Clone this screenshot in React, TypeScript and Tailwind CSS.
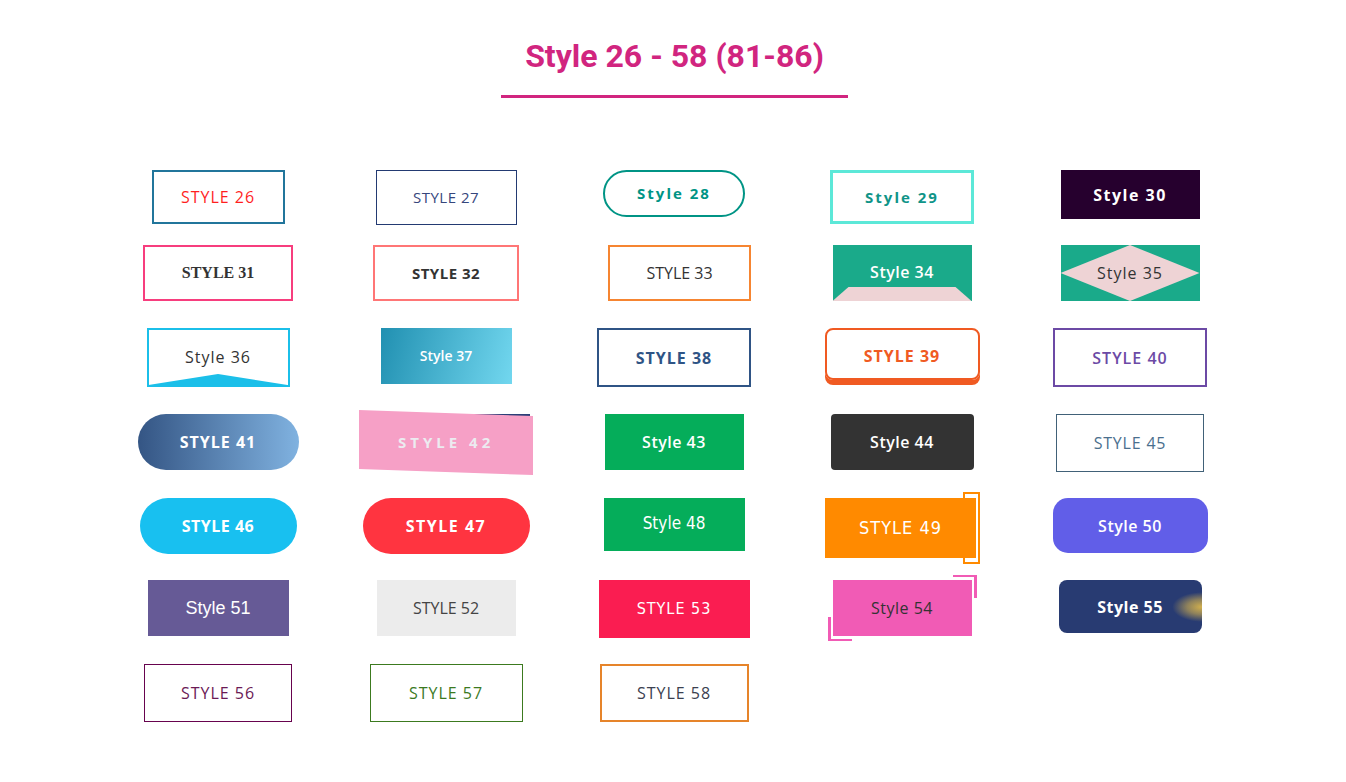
import React from "react";

const sans = "font-['Open_Sans','Noto_Sans',sans-serif]";
const narrow = "font-['Liberation_Sans_Narrow','DejaVu_Sans_Condensed',Roboto,sans-serif]";

// one cell of the 5-column grid, button centred in it
function Cell({ children, className = "" }: { children?: React.ReactNode; className?: string }) {
  return <div className={`flex justify-center items-start ${className}`}>{children}</div>;
}

function Row({ children, h }: { children: React.ReactNode; h: string }) {
  return <div className={`grid grid-cols-5 ${h}`}>{children}</div>;
}

const base = `flex items-center justify-center leading-none ${sans}`;

export default function App() {
  return (
    <div className="w-[1346px] min-h-[782px] bg-white">
      {/* heading */}
      <div className="flex flex-col items-center pt-[38px] pl-[3px]">
        <h2 className="font-['Roboto',sans-serif] font-bold text-[32px] leading-[36px] text-[#d1257f]">
          Style 26 - 58 (81-86)
        </h2>
        <div className="mt-[21px] w-[347px] h-[3px] bg-[#d1257f]"></div>
      </div>

      <div className="w-[1140px] ml-[104px] mt-[72px]">
        {/* row 1 */}
        <Row h="h-[75px]">
          <Cell>
            <button className={`${base} text-[16px] w-[133px] h-[54px] border-2 border-[#21759b] text-[#ff1f1f] tracking-[1px]`}>
              STYLE 26
            </button>
          </Cell>
          <Cell>
            <button className={`${base} text-[15px] w-[141px] h-[55px] border border-[#233a72] text-[#36467c] tracking-[0.5px]`}>
              STYLE 27
            </button>
          </Cell>
          <Cell>
            <button className={`${base} text-[15px] w-[142px] h-[47px] rounded-full border-2 border-[#009485] text-[#009485] font-bold tracking-[2px] pb-[1px]`}>
              Style 28
            </button>
          </Cell>
          <Cell>
            <button className={`${base} text-[15px] w-[144px] h-[54px] border-[3px] border-[#5ce8d8] text-[#0f9488] font-bold tracking-[2px]`}>
              Style 29
            </button>
          </Cell>
          <Cell>
            <button className={`${base} text-[16px] w-[139px] h-[49px] bg-[#26002e] text-white font-bold tracking-[1.5px]`}>
              Style 30
            </button>
          </Cell>
        </Row>

        {/* row 2 */}
        <Row h="h-[83px]">
          <Cell>
            <button className="flex items-center justify-center w-[150px] h-[56px] border-2 border-[#f73e7e] font-['Liberation_Serif',serif] font-bold text-[16px] text-[#333]">
              STYLE 31
            </button>
          </Cell>
          <Cell>
            <button className={`${base} text-[15px] w-[146px] h-[56px] border-2 border-[#ff7676] text-[#333] font-bold tracking-[0.5px]`}>
              STYLE 32
            </button>
          </Cell>
          <Cell>
            <button className={`${base} text-[16px] ml-[11px] w-[143px] h-[56px] border-2 border-[#f68531] text-[#333]`}>
              STYLE 33
            </button>
          </Cell>
          <Cell>
            <button className={`${base} text-[16px] relative w-[139px] h-[56px] bg-[#1aaa8a] text-white font-semibold tracking-[0.5px] pb-[2px]`}>
              <span className="absolute bottom-0 left-0 right-0 h-[14px] bg-[#eed3d5] [clip-path:polygon(16px_0,123px_0,100%_100%,0_100%)]"></span>
              <span className="relative">Style 34</span>
            </button>
          </Cell>
          <Cell>
            <button className={`${base} text-[16px] relative w-[139px] h-[56px] bg-[#1aaa8a] text-[#333] tracking-[1px]`}>
              <span className="absolute inset-0 bg-[#eed3d5] [clip-path:polygon(50%_0,100%_50%,50%_100%,0_50%)]"></span>
              <span className="relative">Style 35</span>
            </button>
          </Cell>
        </Row>

        {/* row 3 */}
        <Row h="h-[86px]">
          <Cell>
            <button className={`${base} text-[16px] relative w-[143px] h-[59px] border-2 border-[#1bbfe9] text-[#333] tracking-[1px] pb-[1px]`}>
              <span className="absolute bottom-0 left-0 right-0 h-[11px] bg-[#1bbfe9] [clip-path:polygon(0_100%,50%_0,100%_100%)]"></span>
              <span className="relative">Style 36</span>
            </button>
          </Cell>
          <Cell>
            <button className={`${base} w-[131px] h-[56px] bg-[linear-gradient(105deg,#2190b1,#72d7ef)] text-white font-semibold text-[14px] pb-[1px]`}>
              Style 37
            </button>
          </Cell>
          <Cell>
            <button className={`${base} text-[16px] w-[154px] h-[59px] border-2 border-[#2f5485] text-[#2f5485] font-bold tracking-[1px]`}>
              STYLE 38
            </button>
          </Cell>
          <Cell>
            <button className={`${base} text-[16px] w-[155px] h-[52px] pt-[4px] rounded-[8px] border-2 border-[#f05a22] shadow-[0_5px_0_#f05a22] text-[#f05a22] font-bold tracking-[1px]`}>
              STYLE 39
            </button>
          </Cell>
          <Cell>
            <button className={`${base} text-[16px] w-[154px] h-[59px] border-2 border-[#6c4aa5] text-[#6c4aa5] font-semibold tracking-[1px]`}>
              STYLE 40
            </button>
          </Cell>
        </Row>

        {/* row 4 */}
        <Row h="h-[84px]">
          <Cell>
            <button className={`${base} text-[16px] w-[161px] h-[56px] rounded-full bg-[linear-gradient(90deg,#345584,#80b2e0)] text-white font-bold tracking-[1px]`}>
              STYLE 41
            </button>
          </Cell>
          <Cell>
            <div className="relative w-[174px] h-[56px]">
              <div className="absolute left-[4px] right-[3px] top-0 h-[55px] bg-[#2c3f78]"></div>
              <button className={`${base} text-[15px] absolute left-0 top-[-1px] w-[174px] h-[59px] skew-y-2 bg-[#f6a0c6] text-[#ecebf0] font-bold tracking-[4px]`}>
                <span className="-skew-y-2">STYLE 42</span>
              </button>
            </div>
          </Cell>
          <Cell>
            <button className={`${base} text-[16px] w-[139px] h-[56px] bg-[#05ad5a] text-white font-semibold tracking-[0.5px]`}>
              Style 43
            </button>
          </Cell>
          <Cell>
            <button className={`${base} text-[16px] w-[143px] h-[56px] rounded-[4px] bg-[#333] text-white font-semibold tracking-[0.5px]`}>
              Style 44
            </button>
          </Cell>
          <Cell>
            <button className={`${base} text-[16px] w-[148px] h-[58px] border border-[#416178] text-[#4a6f8e] tracking-[0.8px]`}>
              STYLE 45
            </button>
          </Cell>
        </Row>

        {/* row 5 */}
        <Row h="h-[82px]">
          <Cell>
            <button className={`${base} text-[16px] w-[157px] h-[56px] rounded-full bg-[#18c0f0] text-white font-bold tracking-[0.5px]`}>
              STYLE 46
            </button>
          </Cell>
          <Cell>
            <button className={`${base} w-[167px] h-[56px] rounded-full bg-[#ff3440] text-white font-bold text-[16px] tracking-[1.5px]`}>
              STYLE 47
            </button>
          </Cell>
          <Cell>
            <button className={`flex items-center justify-center w-[141px] h-[53px] bg-[#05ad5a] text-white text-[17px] leading-none pb-[3px] ${narrow}`}>
              Style 48
            </button>
          </Cell>
          <Cell className="pr-[3px]">
            <div className="relative w-[151px] h-[60px]">
              <span className="absolute left-[138px] top-[-6px] w-[17px] h-[72px] border-2 border-[#ff8a00]"></span>
              <button className={`relative flex items-center justify-center w-[151px] h-[60px] bg-[#ff8a00] text-white text-[18px] leading-none tracking-[1px] ${narrow}`}>
                STYLE 49
              </button>
            </div>
          </Cell>
          <Cell>
            <button className={`${base} text-[16px] w-[155px] h-[55px] rounded-[15px] bg-[#615ee8] text-white font-semibold tracking-[0.5px]`}>
              Style 50
            </button>
          </Cell>
        </Row>

        {/* row 6 */}
        <Row h="h-[84px]">
          <Cell>
            <button className="flex items-center justify-center w-[141px] h-[56px] bg-[#665a96] text-white text-[18px] leading-none pb-[1px] font-['Liberation_Sans',Arial,sans-serif]">
              Style 51
            </button>
          </Cell>
          <Cell>
            <button className={`${base} text-[16px] w-[139px] h-[56px] bg-[#ececec] text-[#444]`}>
              STYLE 52
            </button>
          </Cell>
          <Cell>
            <button className={`flex items-center justify-center w-[151px] h-[58px] bg-[#fa1d51] text-white text-[16px] leading-none tracking-[1px] ${narrow}`}>
              STYLE 53
            </button>
          </Cell>
          <Cell>
            <div className="relative w-[139px] h-[56px]">
              <span className="absolute left-[120px] top-[-5px] w-[24px] h-[23px] border-t-2 border-r-[3px] border-[#f15bb5]"></span>
              <span className="absolute left-[-5px] top-[37px] w-[24px] h-[24px] border-l-[3px] border-b-2 border-[#f15bb5]"></span>
              <button className={`${base} text-[16px] relative w-[139px] h-[56px] bg-[#f15bb5] text-[#333] tracking-[0.5px]`}>
                Style 54
              </button>
            </div>
          </Cell>
          <Cell>
            <button className={`${base} text-[16px] relative overflow-hidden w-[143px] h-[53px] rounded-[8px] bg-[#283b72] text-white font-bold tracking-[0.5px]`}>
              <span className="absolute right-[-30px] top-[12px] w-[60px] h-[30px] bg-[radial-gradient(ellipse_at_center,#d2b04d_0%,rgba(210,176,77,0.6)_35%,rgba(40,59,114,0)_70%)]"></span>
              <span className="relative">Style 55</span>
            </button>
          </Cell>
        </Row>

        {/* row 7 */}
        <Row h="h-[60px]">
          <Cell>
            <button className={`${base} text-[16px] w-[148px] h-[58px] border border-[#67034e] text-[#6b1a55] tracking-[1px]`}>
              STYLE 56
            </button>
          </Cell>
          <Cell>
            <button className={`${base} text-[16px] w-[153px] h-[58px] border border-[#3c7a1f] text-[#3c7a1f] tracking-[1px]`}>
              STYLE 57
            </button>
          </Cell>
          <Cell>
            <button className={`${base} text-[16px] w-[149px] h-[58px] border-2 border-[#e6842a] text-[#3b4150] tracking-[1px]`}>
              STYLE 58
            </button>
          </Cell>
          <Cell />
          <Cell />
        </Row>
      </div>
    </div>
  );
}
